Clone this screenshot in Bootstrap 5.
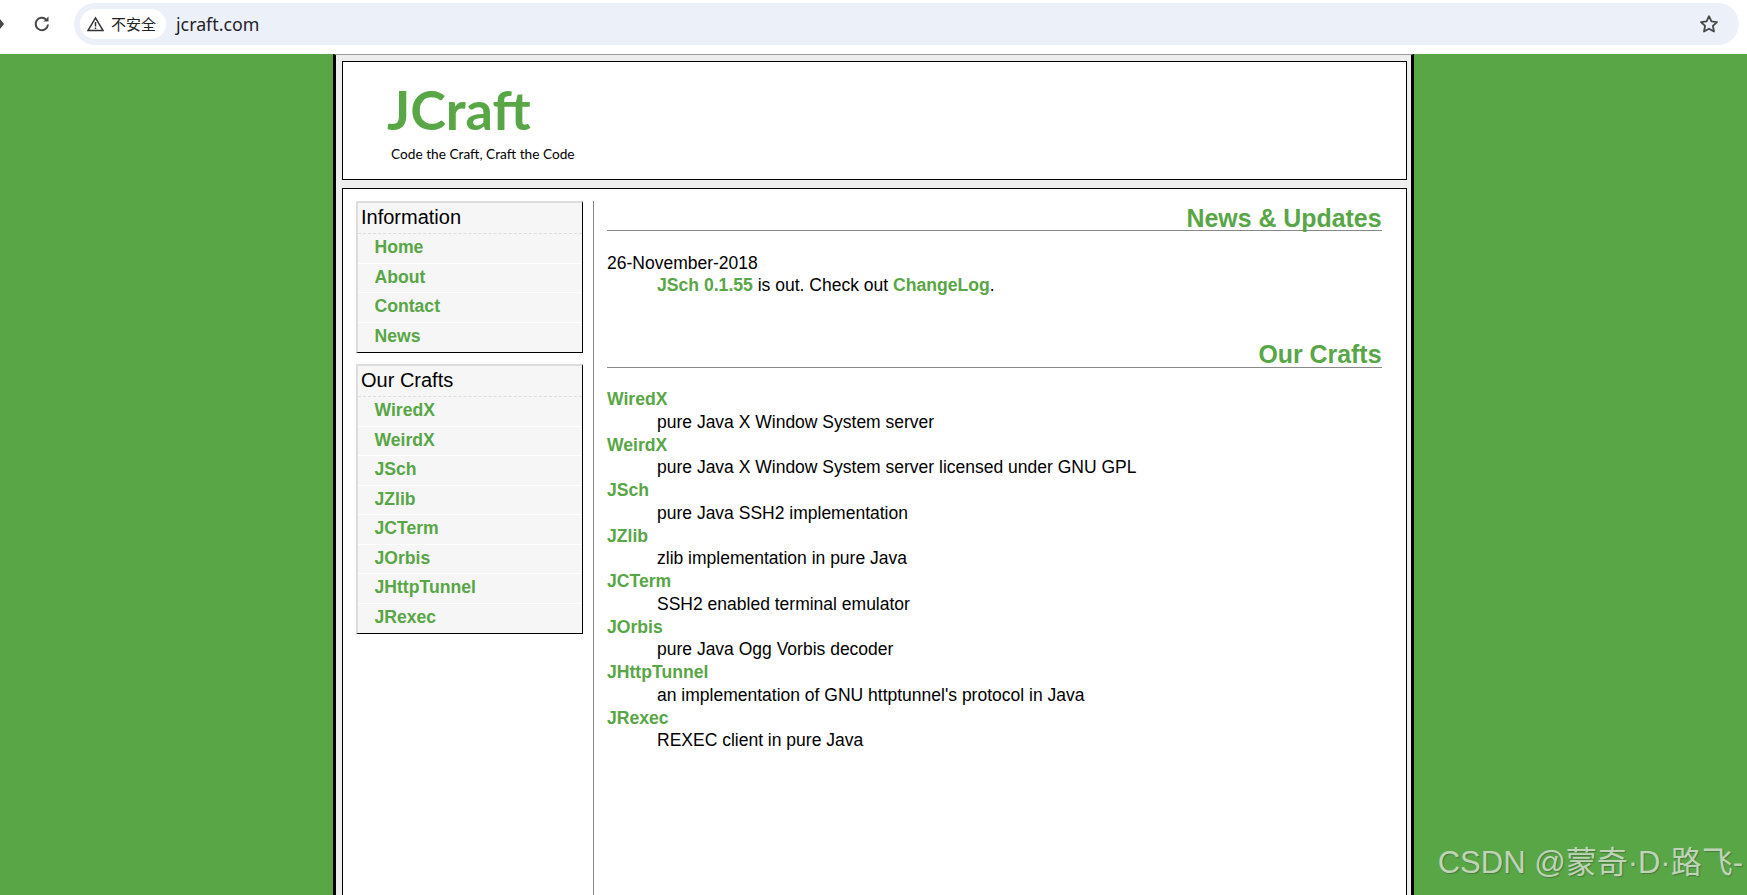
<!DOCTYPE html>
<html lang="en">
<head>
<meta charset="utf-8">
<title>JCraft</title>
<link href="https://cdn.jsdelivr.net/npm/bootstrap@5.3.0/dist/css/bootstrap.min.css" rel="stylesheet">
<style>
html,body{height:100%;overflow:hidden}
body{background:#58a646;font-family:"Liberation Sans",Arial,sans-serif;color:#000;font-size:17.5px;line-height:22.75px;position:relative}
a{color:#58a646;font-weight:700;font-size:17.6px;text-decoration:none}
.chrome-bar{height:54px;background:#fff;padding:3px 8px 9px 0}
.chrome-back{width:4px;margin-right:28px;overflow:hidden}
.chrome-reload{margin-right:22px}
.omni{height:42px;border-radius:21px;background:#ebf0f9;padding:0 20px 0 6px}
.omni-chip{height:30px;border-radius:15px;background:#fff;padding:0 10px 0 7px;font-family:"Noto Sans CJK SC",sans-serif;font-size:15px;color:#222;gap:7px}
.omni-url{font-family:"Noto Sans","Open Sans",sans-serif;font-size:17.8px;color:#1f2328;margin-left:10px}
.page-wrap{width:1081px;margin:0 auto;flex:1 1 auto;min-height:0;background:#eee;border-left:3px solid #000;border-right:3px solid #000;border-top:1px solid #999;padding:6px 4px 0 6px;overflow:hidden}
.masthead{height:119px;background:#fff;border:1px solid #000;padding:18px 0 0 44px;margin-bottom:8px}
.brand-name{font-family:Lato,"Noto Sans",sans-serif;font-weight:700;font-size:54px;line-height:60px;color:#58a646;margin:0}
.brand-tag{font-family:Lato,"Noto Sans",sans-serif;font-size:13.7px;line-height:20px;margin:4px 0 0 4px}
.main-box{background:#fff;border:1px solid #000;border-bottom:0;flex:1 1 auto;min-height:0;padding:12px 0 0 13px}
.side-col{width:227px;flex:none;margin-right:10px}
.menu-box{background:#f6f6f6;border:1px solid #000;border-top:2px solid #ddd;border-left:2px solid #ddd;margin-bottom:11px}
.menu-title{font-size:20px;line-height:28px;height:31px;padding:0 0 0 3px;border-bottom:1px dashed #ddd}
.menu-item{display:block;height:29.5px;line-height:27px;padding-left:16.5px;border-bottom:1px solid #fff}
.menu-item:last-child{border-bottom:0}
.content-col{border-left:1px solid #888;padding:0 24.5px 0 13px;flex:1 1 auto;min-width:0}
.sect-head{font-size:24.9px;font-weight:700;line-height:28px;color:#58a646;text-align:right;border-bottom:1px solid #888;margin:0 0 20.5px;height:29px;padding-top:1.5px}
.news-block{margin-bottom:41.5px}
.news-head{padding-top:2.7px;height:29.5px;margin-bottom:21px}
.entry-list{margin:0}
.entry-list dt{font-weight:400}
.entry-list dd{margin:0 0 0 50px}
.watermark{position:absolute;right:4px;bottom:12px;font-family:"Liberation Sans","Noto Sans CJK SC",sans-serif;font-size:31px;line-height:40px;color:#bfd4b7;text-shadow:1px 1px 1px #4a7a3c}
</style>
</head>
<body class="d-flex flex-column">
<div class="chrome-bar d-flex align-items-center">
  <svg class="chrome-back" width="4" height="14" viewBox="0 0 4 14"><path d="M0 2l4 5-4 5z" fill="#474747"/></svg>
  <svg class="chrome-reload" width="20" height="20" viewBox="0 0 20 20" fill="none" stroke="#474747" stroke-width="2"><path d="M16 10.5A6.2 6.2 0 1 1 14.2 5.6"/><path d="M16.5 2.5v5h-5" fill="#474747" stroke="none"/></svg>
  <div class="omni flex-grow-1 d-flex align-items-center">
    <div class="omni-chip d-flex align-items-center">
      <svg width="17" height="16" viewBox="0 0 18 16"><path d="M9 1.5L17 15H1z" fill="none" stroke="#333" stroke-width="1.6"/><path d="M8.2 6h1.6v4.6H8.2zM8.2 11.6h1.6v1.6H8.2z" fill="#333"/></svg>
      <span>不安全</span>
    </div>
    <span class="omni-url flex-grow-1">jcraft.com</span>
    <svg width="20" height="20" viewBox="0 0 20 20"><path d="M10 2.2l2.4 5.2 5.6.7-4.1 3.8 1.1 5.6-5-2.8-5 2.8 1.1-5.6L2 8.1l5.6-.7z" fill="none" stroke="#474747" stroke-width="1.8" stroke-linejoin="round"/></svg>
  </div>
</div>
<div class="page-wrap d-flex flex-column">
  <header class="masthead">
    <h1 class="brand-name">JCraft</h1>
    <p class="brand-tag">Code the Craft, Craft the Code</p>
  </header>
  <div class="main-box d-flex">
    <nav class="side-col">
      <div class="menu-box">
        <div class="menu-title">Information</div>
        <a class="menu-item" href="#">Home</a>
        <a class="menu-item" href="#">About</a>
        <a class="menu-item" href="#">Contact</a>
        <a class="menu-item" href="#">News</a>
      </div>
      <div class="menu-box">
        <div class="menu-title">Our Crafts</div>
        <a class="menu-item" href="#">WiredX</a>
        <a class="menu-item" href="#">WeirdX</a>
        <a class="menu-item" href="#">JSch</a>
        <a class="menu-item" href="#">JZlib</a>
        <a class="menu-item" href="#">JCTerm</a>
        <a class="menu-item" href="#">JOrbis</a>
        <a class="menu-item" href="#">JHttpTunnel</a>
        <a class="menu-item" href="#">JRexec</a>
      </div>
    </nav>
    <main class="content-col">
      <div class="news-block">
        <h2 class="sect-head news-head">News &amp; Updates</h2>
        <dl class="entry-list">
          <dt>26-November-2018</dt>
          <dd><a href="#">JSch 0.1.55</a> is out. Check out <a href="#">ChangeLog</a>.</dd>
        </dl>
      </div>
      <h2 class="sect-head">Our Crafts</h2>
      <dl class="entry-list">
        <dt><a href="#">WiredX</a></dt><dd>pure Java X Window System server</dd>
        <dt><a href="#">WeirdX</a></dt><dd>pure Java X Window System server licensed under GNU GPL</dd>
        <dt><a href="#">JSch</a></dt><dd>pure Java SSH2 implementation</dd>
        <dt><a href="#">JZlib</a></dt><dd>zlib implementation in pure Java</dd>
        <dt><a href="#">JCTerm</a></dt><dd>SSH2 enabled terminal emulator</dd>
        <dt><a href="#">JOrbis</a></dt><dd>pure Java Ogg Vorbis decoder</dd>
        <dt><a href="#">JHttpTunnel</a></dt><dd>an implementation of GNU httptunnel's protocol in Java</dd>
        <dt><a href="#">JRexec</a></dt><dd>REXEC client in pure Java</dd>
      </dl>
    </main>
  </div>
</div>
<div class="watermark">CSDN @蒙奇·D·路飞-</div>
<script src="https://cdn.jsdelivr.net/npm/bootstrap@5.3.0/dist/js/bootstrap.bundle.min.js"></script>
</body>
</html>
